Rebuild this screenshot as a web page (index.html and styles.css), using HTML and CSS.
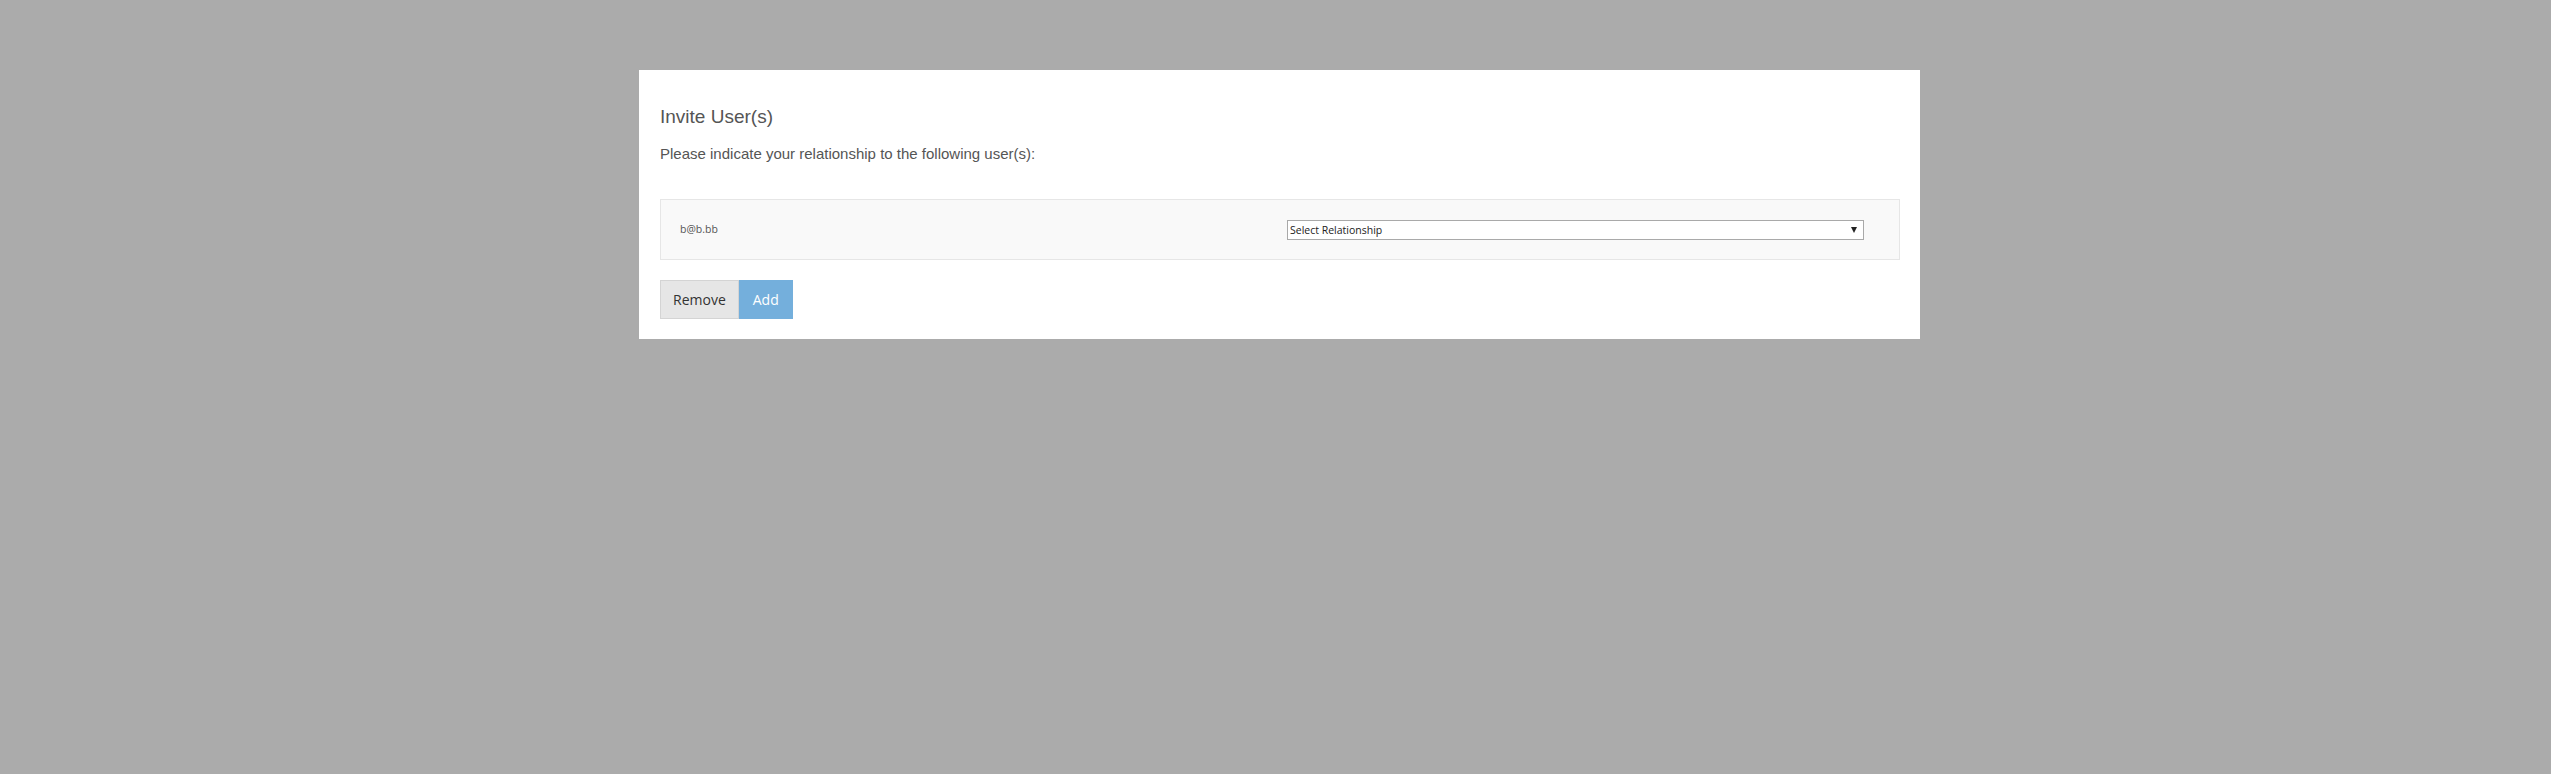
FILE: index.html
```html
<!DOCTYPE html>
<html lang="en">
<head>
  <meta charset="UTF-8">
  <title>Invite User(s)</title>
  <link rel="stylesheet" href="styles.css">
</head>
<body>
  <div class="modal">
    <h2 class="modal-title">Invite User(s)</h2>
    <p class="modal-text">Please indicate your relationship to the following user(s):</p>

    <div class="invite-row">
      <div class="invite-email">b@b.bb</div>
      <div class="select-wrap">
        <select class="relationship">
          <option>Select Relationship</option>
          <option>Parent</option>
          <option>Guardian</option>
          <option>Other</option>
        </select>
      </div>
    </div>

    <div class="actions">
      <button class="btn btn-remove">Remove</button>
      <button class="btn btn-add">Add</button>
    </div>
  </div>
</body>
</html>
```

FILE: styles.css
```css
body {
  margin: 0;
  background: #ababab;
  font-family: "Liberation Sans", Arial, sans-serif;
  color: #555;
}
.modal {
  box-sizing: border-box;
  width: 1281px;
  margin: 70px 0 0 639px;
  padding: 36px 20px 20px 21px;
  background: #ffffff;
}
.modal-title {
  margin: 0;
  font-size: 19px;
  font-weight: normal;
  line-height: 22px;
  color: #555;
}
.modal-text {
  margin: 17px 0 0;
  font-size: 15px;
  line-height: 17px;
  color: #555;
}
.invite-row {
  box-sizing: border-box;
  display: flex;
  align-items: center;
  height: 61px;
  margin-top: 37px;
  padding: 0 35px 0 19px;
  background: #f9f9f9;
  border: 1px solid #e6e6e6;
}
.invite-email {
  flex: 1;
  font-family: "Open Sans", sans-serif;
  font-size: 10.5px;
  color: #555;
  margin-top: -2px;
}
.select-wrap {
  position: relative;
  width: 577px;
}
.select-wrap::after {
  content: "";
  position: absolute;
  right: 7px;
  top: 7px;
  border-left: 3px solid transparent;
  border-right: 3px solid transparent;
  border-top: 6px solid #222;
  pointer-events: none;
}
.relationship {
  -webkit-appearance: none;
  appearance: none;
  box-sizing: border-box;
  display: block;
  width: 100%;
  height: 20px;
  margin: 0;
  padding: 0 0 0 2px;
  border: 1px solid #a9a9a9;
  border-radius: 0;
  background: #fff;
  font-family: "Open Sans", sans-serif;
  font-size: 10.5px;
  color: #222;
}
.actions {
  display: flex;
  margin-top: 20px;
}
.btn {
  box-sizing: border-box;
  height: 39px;
  padding: 0 12px;
  border: 1px solid #d4d4d4;
  border-radius: 0;
  font-family: "Open Sans", sans-serif;
  font-size: 14px;
  cursor: pointer;
}
.btn-remove {
  background: #e6e6e6;
  color: #333;
}
.btn-add {
  background: #74afdc;
  border-color: #74afdc;
  color: #fff;
  padding: 0 13px;
}
```
